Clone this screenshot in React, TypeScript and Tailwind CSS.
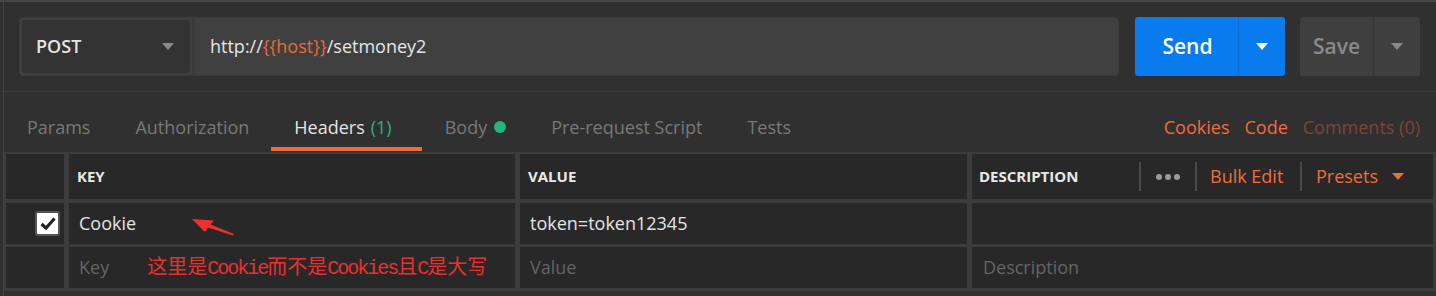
import React from "react";

const font = { fontFamily: '"Open Sans", "Noto Sans", sans-serif' };
const mono = { fontFamily: '"Liberation Mono", monospace' };

function Caret({ className }: { className: string }) {
  return (
    <svg width="12" height="7" viewBox="0 0 12 7" className={className}>
      <path d="M0 0 L12 0 L6 7 Z" fill="currentColor" />
    </svg>
  );
}

function Tab({ label, active, extra, wide }: { label: string; active?: boolean; extra?: React.ReactNode; wide?: boolean }) {
  return (
    <div className={`relative flex h-full items-center pl-[23px] pt-[9px] ${wide ? "pr-[30px]" : "pr-[22px]"}`}>
      <span className={active ? "text-[#e4e4e4]" : "text-[#787878]"}>{label}</span>
      {extra}
      {active ? <div className="absolute bottom-[1px] left-0 right-0 h-[4px] bg-[#f26b3a]" /> : null}
    </div>
  );
}

export default function App() {
  return (
    <div
      className="h-[296px] w-[1436px] overflow-hidden border-t-2 border-[#464646] bg-[#303030]"
      style={font}
    >
      <div className="ml-[3px] flex h-full flex-col border-l border-[#424242]">
        {/* request bar */}
        <div className="flex h-[90px] shrink-0 items-center border-b border-[#3c3c3c] pl-[15px] pr-[16px]">
          <div className="flex h-[59px] w-[1100px] rounded-[4px] border border-[#3a3a3a] bg-[#404040]">
            <div className="m-[2px] flex w-[168px] items-center justify-between rounded-[3px] bg-[#333333] pl-[14px] pr-[16px]">
              <span className="text-[18px] font-semibold text-[#e6e6e6]">POST</span>
              <Caret className="text-[#8a8a8a]" />
            </div>
            <div className="w-[3px] bg-[#3a3a3a]" />
            <div className="flex items-center pl-[15px] text-[18px] text-[#e6e6e6]">
              http://<span className="text-[#e8693a]">{"{{host}}"}</span>/setmoney2
            </div>
          </div>
          <div className="ml-[16px] flex h-[59px] w-[150px] overflow-hidden rounded-[3px] bg-[#097bed]">
            <div className="flex w-[103px] items-center justify-center pl-[2px] pt-[1px] text-[21px] font-semibold text-white">
              Send
            </div>
            <div className="w-[1px] bg-[#0a6ed6]" />
            <div className="flex flex-1 items-center justify-center">
              <Caret className="text-white" />
            </div>
          </div>
          <div className="ml-[15px] flex h-[59px] w-[120px] overflow-hidden rounded-[3px] bg-[#3f3f3f]">
            <div className="flex w-[73px] items-center justify-center pt-[1px] text-[21px] font-semibold text-[#8a8a8a]">
              Save
            </div>
            <div className="w-[1px] bg-[#363636]" />
            <div className="flex flex-1 items-center justify-center">
              <Caret className="text-[#8a8a8a]" />
            </div>
          </div>
        </div>

        {/* tabs */}
        <div className="flex h-[60px] shrink-0 items-stretch justify-between pr-[16px] pt-[1px] text-[18px]">
          <div className="flex items-stretch">
            <Tab label="Params" />
            <Tab label="Authorization" />
            <Tab label="Headers" active wide extra={<span className="ml-[6px] text-[#26b47f]">(1)</span>} />
            <Tab
              label="Body"
              extra={<span className="ml-[7px] inline-block h-[12px] w-[12px] rounded-full bg-[#26b47f]" />}
            />
            <Tab label="Pre-request Script" />
            <Tab label="Tests" />
          </div>
          <div className="flex items-center gap-[15px] pt-[9px]">
            <span className="text-[#f26b3a]">Cookies</span>
            <span className="text-[#f26b3a]">Code</span>
            <span className="text-[#7d4632]">Comments (0)</span>
          </div>
        </div>

        {/* headers table */}
        <div className="relative bg-[#3c3c3c] pb-[3px] pl-[2px] pr-[3px] pt-[2px]">
          <div className="grid grid-cols-[58px_446px_447px_1fr] grid-rows-[45px_41px_41px] gap-x-[5px] gap-y-[3.5px]">
            <div className="bg-[#282828]" />
            <div className="flex items-center bg-[#282828] pl-[8px] text-[15px] font-bold text-[#e8e8e8]">KEY</div>
            <div className="flex items-center bg-[#282828] pl-[8px] text-[15px] font-bold text-[#e8e8e8]">VALUE</div>
            <div className="flex items-center bg-[#282828] pl-[7px] text-[15px] font-bold text-[#e8e8e8]">
              <span className="w-[160px]">DESCRIPTION</span>
              <div className="h-[29px] w-[2px] bg-[#4a4a4a]" />
              <div className="flex w-[54px] items-center justify-center gap-[3px]">
                <span className="h-[6px] w-[6px] rounded-full bg-[#9a9a9a]" />
                <span className="h-[6px] w-[6px] rounded-full bg-[#9a9a9a]" />
                <span className="h-[6px] w-[6px] rounded-full bg-[#9a9a9a]" />
              </div>
              <div className="h-[29px] w-[2px] bg-[#4a4a4a]" />
              <span className="w-[103px] pl-[13px] text-[18px] font-normal text-[#f26b3a]">Bulk Edit</span>
              <div className="h-[29px] w-[2px] bg-[#4a4a4a]" />
              <span className="pl-[14px] text-[18px] font-normal text-[#f26b3a]">Presets</span>
              <Caret className="ml-[14px] text-[#f26b3a]" />
            </div>

            <div className="flex items-center justify-end bg-[#282828] pr-[4px]">
              <div className="flex h-[25px] w-[25px] items-center justify-center rounded-[3px] border-2 border-[#555555] bg-white">
                <svg width="16" height="13" viewBox="0 0 16 13">
                  <path d="M1.5 7 L6 11 L14.5 1.5" fill="none" stroke="#222" strokeWidth="3.2" strokeLinejoin="miter" />
                </svg>
              </div>
            </div>
            <div className="flex items-center bg-[#282828] pl-[10px] text-[18px] text-[#e4e4e4]">Cookie</div>
            <div className="flex items-center bg-[#282828] pl-[10px] text-[18px] text-[#e4e4e4]">token=token12345</div>
            <div className="bg-[#282828]" />

            <div className="bg-[#282828]" />
            <div className="flex items-center bg-[#282828] pl-[10px] text-[18px] text-[#646464]">
              <span>Key</span>
              <span
                className="ml-[38px] text-[20px] text-[#e8312f]"
                style={{ fontFamily: '"Noto Sans CJK SC", sans-serif' }}
              >
                这里是<span className="tracking-[-2px]" style={mono}>Cookie</span>而不是
                <span className="tracking-[-2px]" style={mono}>Cookies</span>且
                <span className="tracking-[-2px]" style={mono}>C</span>是大写
              </span>
            </div>
            <div className="flex items-center bg-[#282828] pl-[10px] text-[18px] text-[#646464]">Value</div>
            <div className="flex items-center bg-[#282828] pl-[11px] text-[18px] text-[#646464]">Description</div>
          </div>

          <svg className="pointer-events-none absolute left-[183px] top-[63px]" width="50" height="24" viewBox="0 0 50 24">
            <path d="M5 4 L27 5.5 L23.5 9.5 L47 19 L46 20.5 L21 12.5 L18 17 Z" fill="#f0302a" />
          </svg>
        </div>
      </div>
    </div>
  );
}
